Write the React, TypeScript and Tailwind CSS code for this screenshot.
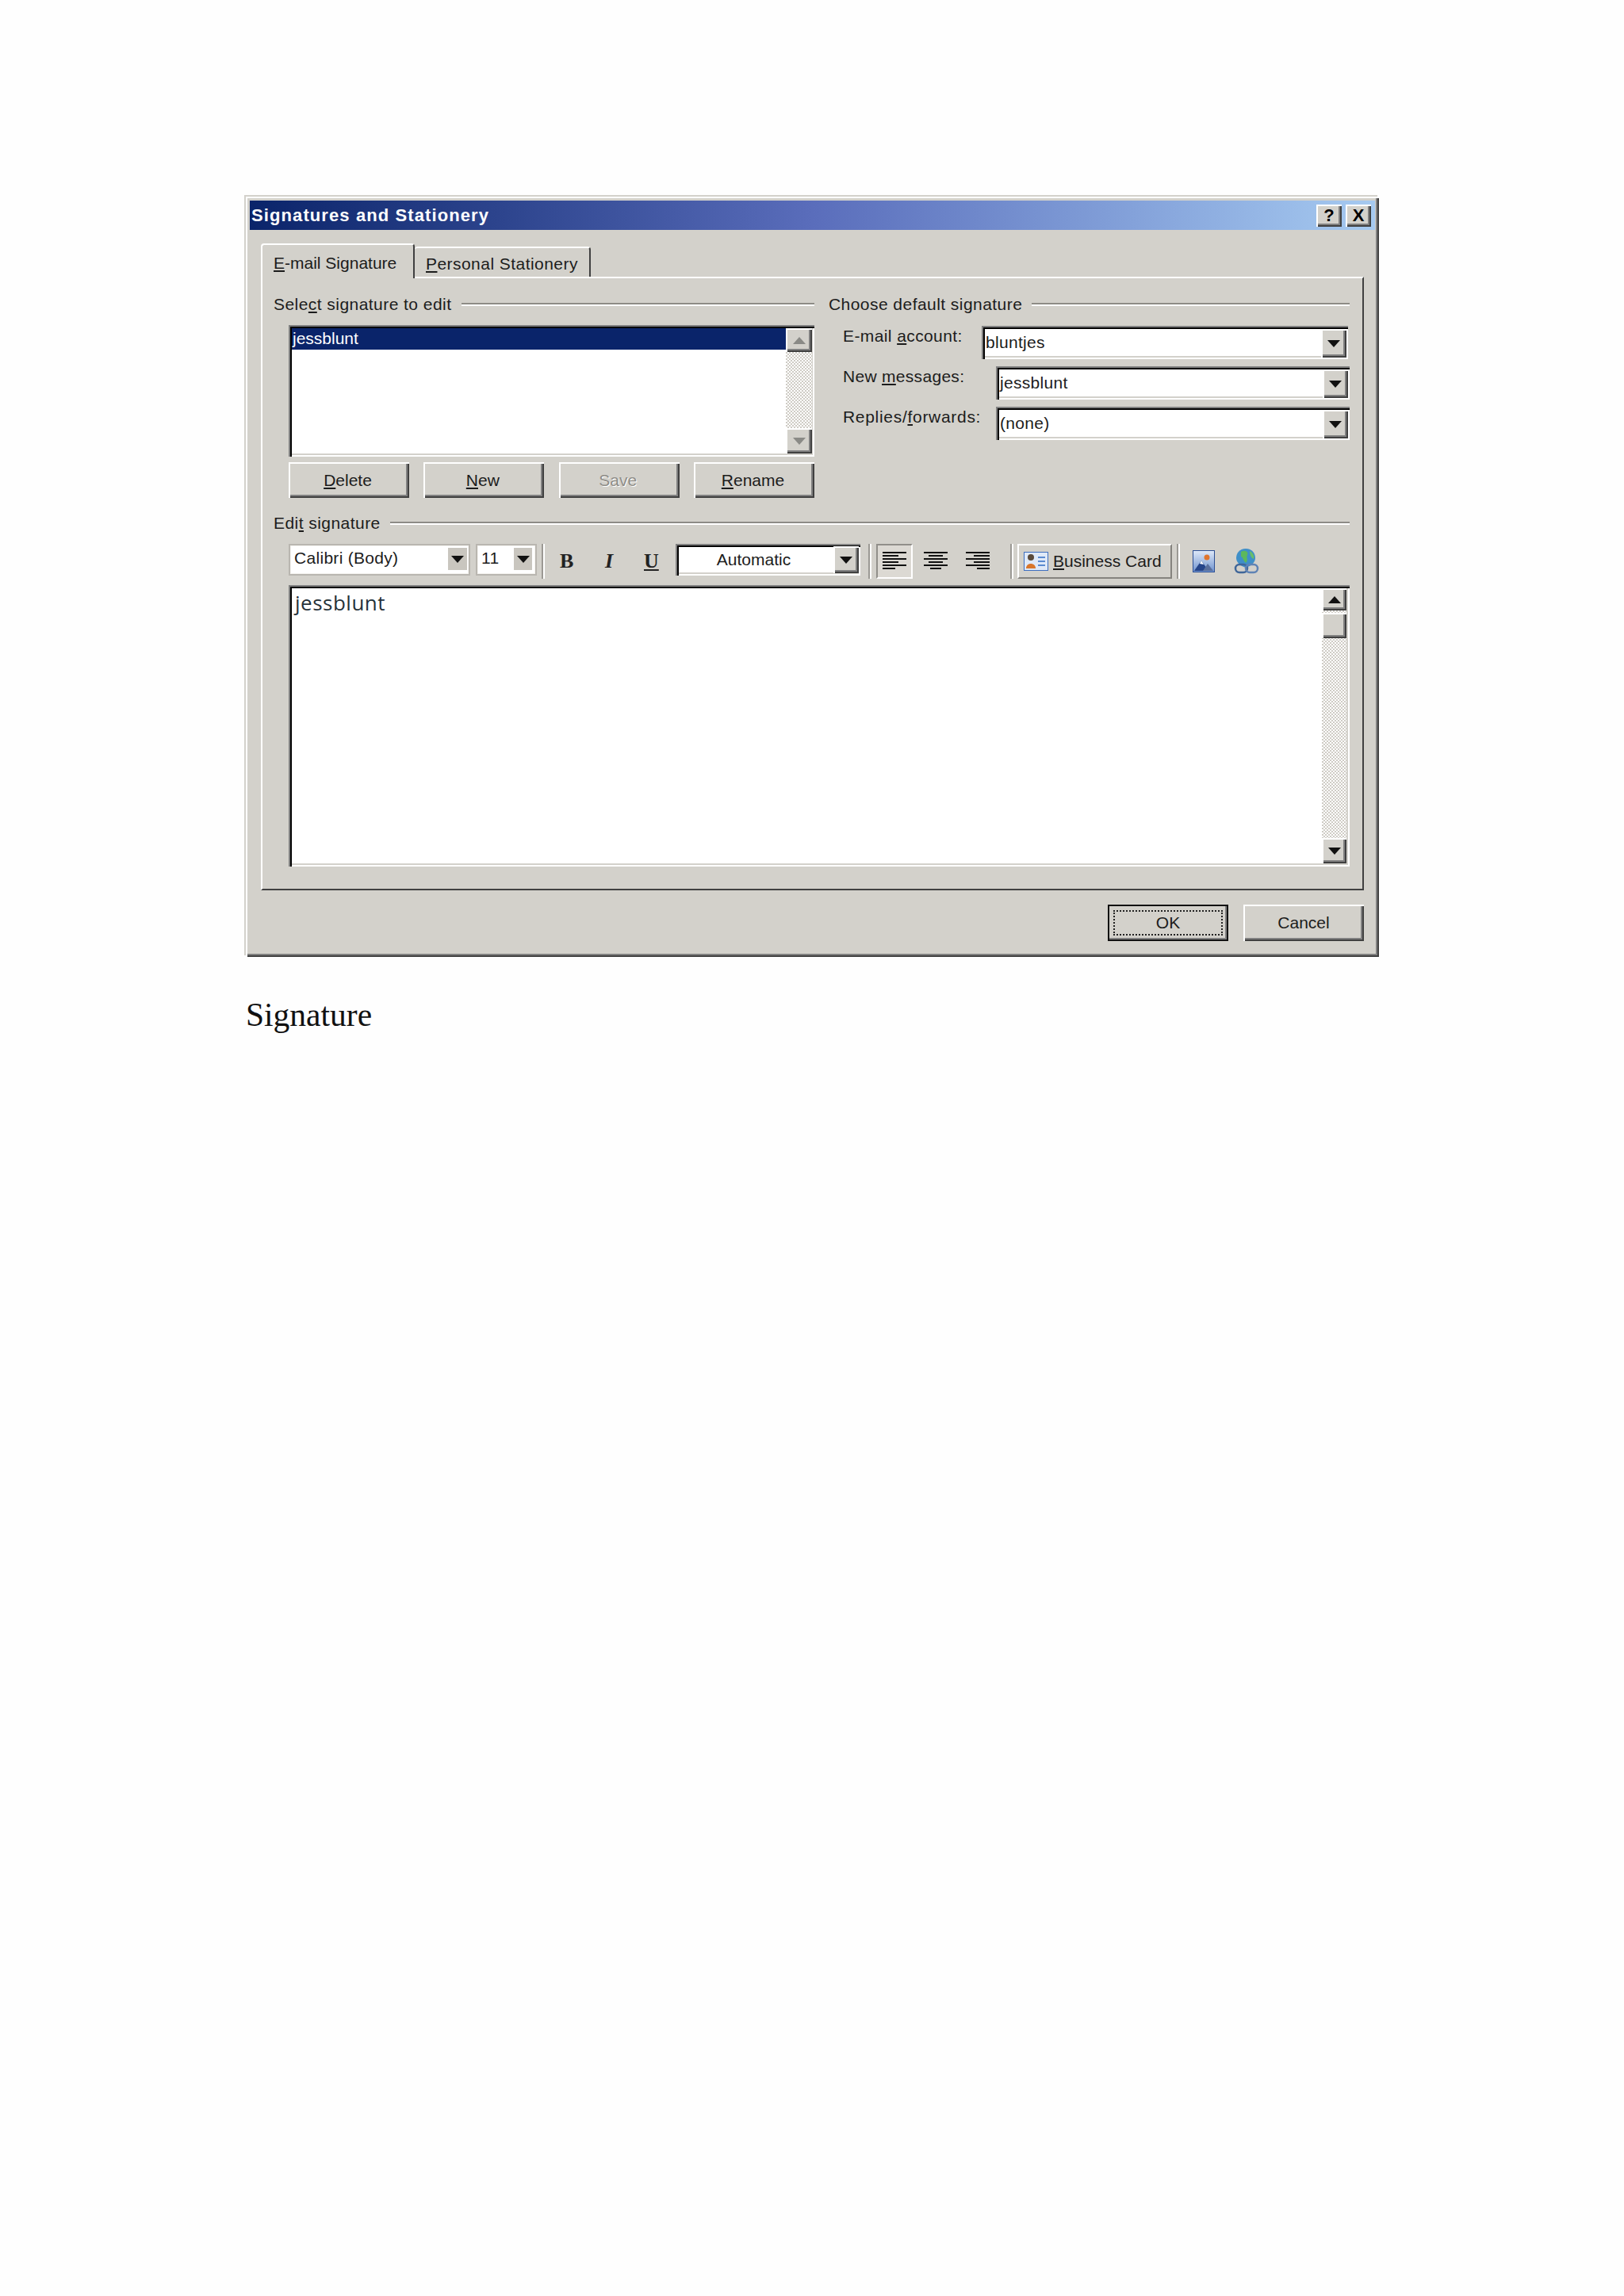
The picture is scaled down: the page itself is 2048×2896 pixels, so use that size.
const raised = 'shadow-[inset_2px_2px_0_#ffffff,inset_-2px_-2px_0_#404040,inset_-4px_-4px_0_#808080]';
const sunken = 'shadow-[inset_2px_2px_0_#808080,inset_4px_4px_0_#000000,inset_-2px_-2px_0_#ffffff,inset_-4px_-4px_0_#d3d1cb]';
const track = 'bg-[repeating-conic-gradient(#cfccc5_0_25%,#ffffff_0_50%)] bg-size-[4px_4px]';

function Arrow({ up, muted }: { up?: boolean; muted?: boolean }) {
  return (
    <svg width="16" height="9" viewBox="0 0 16 9">
      <path d={up ? 'M8 0 L16 9 L0 9 Z' : 'M0 0 L16 0 L8 9 Z'} fill={muted ? '#8a8a86' : '#111111'} />
    </svg>
  );
}

function ArrowButton({ up, muted, className }: { up?: boolean; muted?: boolean; className: string }) {
  return (
    <div className={`flex items-center justify-center bg-[#d3d1cb] ${raised} ${className}`}>
      <Arrow up={up} muted={muted} />
    </div>
  );
}

function GroupLabel({ children, lineLeft }: { children: React.ReactNode; lineLeft: string }) {
  return (
    <div className="flex h-[24px] items-center">
      <span className="whitespace-nowrap tracking-[0.45px]">{children}</span>
      <div className={`h-[4px] flex-1 border-t-2 border-b-2 border-t-[#8d8b86] border-b-white ${lineLeft}`} />
    </div>
  );
}

function Button({ children, disabled }: { children: React.ReactNode; disabled?: boolean }) {
  return (
    <div className={`flex h-[45px] w-[152px] items-center justify-center bg-[#d3d1cb] pr-[3px] ${raised} ${disabled ? 'text-[#8f8d88] [text-shadow:1px_1px_0_#ffffff]' : ''}`}>
      <span>{children}</span>
    </div>
  );
}

function Combo({ text, className }: { text: string; className: string }) {
  return (
    <div className={`flex h-[42px] bg-white pl-[5px] ${sunken} ${className}`}>
      <span className="flex-1 pt-[9px] tracking-[0.3px]">{text}</span>
      <ArrowButton className="mt-[4px] mr-[2px] h-[36px] w-[32px]" />
    </div>
  );
}

function FlatCombo({ text, className, buttonClass }: { text: string; className: string; buttonClass: string }) {
  return (
    <div className={`flex h-[40px] border-2 border-[#b9b6b0] bg-white pl-[5px] shadow-[inset_0_0_0_1px_#f4f3ef] ${className}`}>
      <span className="flex-1 pt-[4px] tracking-[0.3px]">{text}</span>
      <div className={`mt-[3px] flex h-[28px] items-center justify-center bg-[#c9c6bf] ${buttonClass}`}>
        <Arrow />
      </div>
    </div>
  );
}

function ToolbarSeparator({ className }: { className: string }) {
  return <div className={`h-[44px] w-[4px] border-r-2 border-l-2 border-r-white border-l-[#9b9994] ${className}`} />;
}

function AlignIcon({ lines }: { lines: [number, number][] }) {
  return (
    <svg width="30" height="24" viewBox="0 0 30 24">
      {lines.map(([x, w], i) => (
        <rect key={i} x={x} y={i * 4} width={w} height="2" fill="#111111" />
      ))}
    </svg>
  );
}

function CardIcon() {
  return (
    <svg width="31" height="24" viewBox="0 0 31 24">
      <rect x="0.5" y="0.5" width="30" height="23" fill="#dfe9f8" stroke="#3f6fbf" />
      <circle cx="9" cy="7" r="4" fill="#5a4a3a" />
      <path d="M3 21 C3 13 15 13 15 21 Z" fill="#d9762b" />
      <path d="M18 7h9M18 12h9M18 17h9" stroke="#5b8bd0" strokeWidth="2" />
    </svg>
  );
}

function PictureIcon() {
  return (
    <svg width="28" height="28" viewBox="0 0 28 28">
      <defs>
        <linearGradient id="pic-sky" x1="0" y1="0" x2="0" y2="1">
          <stop offset="0" stopColor="#dfe9f8" />
          <stop offset="1" stopColor="#6f93cf" />
        </linearGradient>
      </defs>
      <rect x="0.5" y="0.5" width="27" height="27" fill="url(#pic-sky)" stroke="#2c4f94" />
      <circle cx="18" cy="9" r="3.5" fill="#e0752d" />
      <path d="M2 26 L11 13 L20 26 Z" fill="#26458a" />
      <path d="M13 26 L19 17 L26 26 Z" fill="#5a6f9c" />
      <path d="M11 13 L14 18 L9 17 Z" fill="#ffffff" />
    </svg>
  );
}

function LinkIcon() {
  return (
    <svg width="32" height="33" viewBox="0 0 32 33">
      <path d="M15 0 C23 0 27 6 27 12 C27 17 22 22 15 24 C8 22 3 17 3 12 C3 6 7 0 15 0 Z" fill="#3f8fc8" />
      <path d="M9 4 C14 1 19 4 17 8 C15 11 19 14 15 18 C11 14 12 11 9 10 Z" fill="#5cb85c" />
      <path d="M20 3 C24 5 26 9 25 13 C22 12 20 8 20 3 Z" fill="#69bf69" />
      <rect x="2" y="20" width="15" height="10" rx="5" fill="none" stroke="#3f6699" strokeWidth="2.5" />
      <rect x="15" y="20" width="15" height="10" rx="5" fill="none" stroke="#5f83b5" strokeWidth="2.5" />
    </svg>
  );
}

export default function App() {
  return (
    <div className="min-h-[2896px] bg-[#fefefe] pt-[248px] pl-[310px] font-['Liberation_Sans',sans-serif] text-[21px] leading-[24px] text-[#1c1c1c]">
      <div className="flex h-[959px] w-[1429px] flex-col bg-[#d3d1cb] p-[5px] shadow-[-2px_-2px_0_#d3d1cb,inset_2px_2px_0_#ffffff,inset_-2px_-2px_0_#404040,inset_-4px_-4px_0_#808080]">
        {/* title bar */}
        <div className="flex h-[37px] items-center justify-between bg-gradient-to-r from-[#0a246a] via-[#5a6dbb] to-[#a6caf0] pr-[5px] pl-[2px]">
          <span className="text-[22px] font-bold tracking-[1.1px] text-white">Signatures and Stationery</span>
          <div className="flex gap-[5px]">
            <div className={`flex h-[28px] w-[32px] items-center justify-center bg-[#d3d1cb] text-[22px] font-bold text-black ${raised}`}>?</div>
            <div className={`flex h-[28px] w-[32px] items-center justify-center bg-[#d3d1cb] text-[22px] font-bold text-black ${raised}`}>X</div>
          </div>
        </div>

        {/* tabs */}
        <div className="mt-[17px] ml-[14px] flex h-[42px] items-end">
          <div className="relative z-10 -mb-[2px] flex h-[44px] w-[194px] rounded-t-[4px] border-t-2 border-r-2 border-l-2 border-t-white border-r-[#404040] border-l-white bg-[#d3d1cb] pt-[11px] pl-[14px]">
            <span><u className="underline-offset-2">E</u>-mail Signature</span>
          </div>
          <div className="flex h-[38px] w-[222px] rounded-t-[4px] border-t-2 border-r-2 border-t-white border-r-[#404040] pt-[8px] pl-[14px]">
            <span className="tracking-[0.45px]"><u className="underline-offset-2">P</u>ersonal Stationery</span>
          </div>
        </div>

        {/* tab panel */}
        <div className="ml-[14px] h-[774px] w-[1391px] border-2 border-t-white border-r-[#404040] border-b-[#404040] border-l-white px-[14px] pt-[21px]">
          <div className="flex gap-[18px]">
            <div className="w-[682px]">
              <GroupLabel lineLeft="ml-[13px]">Sele<u className="underline-offset-2">c</u>t signature to edit</GroupLabel>
              <div className="mt-[14px] ml-[19px] w-[663px]">
                <div className={`flex h-[166px] bg-white p-[4px] pr-[3px] ${sunken}`}>
                  <div className="flex-1">
                    <div className="h-[27px] bg-[#0a246a] pt-[1px] pl-[1px] text-white">jessblunt</div>
                  </div>
                  <div className={`flex w-[33px] flex-col justify-between ${track}`}>
                    <ArrowButton up muted className="h-[30px]" />
                    <ArrowButton muted className="h-[32px]" />
                  </div>
                </div>
                <div className="mt-[7px] flex justify-between">
                  <Button><u className="underline-offset-2">D</u>elete</Button>
                  <Button><u className="underline-offset-2">N</u>ew</Button>
                  <Button disabled>Save</Button>
                  <Button><u className="underline-offset-2">R</u>ename</Button>
                </div>
              </div>
            </div>

            <div className="w-[657px]">
              <GroupLabel lineLeft="ml-[12px]">Choose default signature</GroupLabel>
              <div className="mt-[15px] flex flex-col gap-[9px] pl-[18px]">
                <div className="flex justify-between pr-[2px]">
                  <span className="pt-[1px] tracking-[0.4px]">E-mail <u className="underline-offset-2">a</u>ccount:</span>
                  <Combo text="bluntjes" className="w-[462px]" />
                </div>
                <div className="flex justify-between">
                  <span className="pt-[1px] tracking-[0.3px]">New <u className="underline-offset-2">m</u>essages:</span>
                  <Combo text="jessblunt" className="w-[446px]" />
                </div>
                <div className="flex justify-between">
                  <span className="pt-[1px] tracking-[0.7px]">Replies/<u className="underline-offset-2">f</u>orwards:</span>
                  <Combo text="(none)" className="w-[446px]" />
                </div>
              </div>
            </div>
          </div>

          {/* edit signature */}
          <div className="mt-[20px] w-[1357px]">
            <GroupLabel lineLeft="ml-[12px]">Edi<u className="underline-offset-2">t</u> signature</GroupLabel>
          </div>
          <div className="mt-[14px] ml-[19px] flex h-[44px] items-start">
            <FlatCombo text="Calibri (Body)" className="w-[229px]" buttonClass="w-[24px] mr-[2px]" />
            <FlatCombo text="11" className="ml-[7px] w-[77px]" buttonClass="w-[23px] mr-[4px]" />
            <ToolbarSeparator className="ml-[6px]" />
            <div className="flex h-[44px] items-center font-['Liberation_Serif',serif] text-[26px] text-[#222222]">
              <span className="ml-[19px] w-[24px] font-bold">B</span>
              <span className="ml-[33px] w-[24px] font-bold italic">I</span>
              <span className="ml-[25px] w-[24px] font-bold underline underline-offset-2">U</span>
            </div>
            <div className={`ml-[16px] flex h-[40px] w-[233px] bg-white ${sunken}`}>
              <span className="flex-1 pt-[8px] pr-[2px] text-center">Automatic</span>
              <ArrowButton className="mt-[3px] mr-[2px] h-[34px] w-[32px]" />
            </div>
            <ToolbarSeparator className="ml-[10px]" />
            <div className="ml-[6px] flex h-[44px] w-[46px] items-center justify-center border-2 border-t-[#918f8a] border-r-white border-b-white border-l-[#918f8a] bg-[#dcd9d3]">
              <AlignIcon lines={[[0, 30], [0, 20], [0, 30], [0, 20], [0, 30], [0, 16]]} />
            </div>
            <div className="flex h-[44px] w-[58px] items-center justify-center">
              <AlignIcon lines={[[0, 30], [6, 18], [0, 30], [6, 18], [0, 30], [8, 14]]} />
            </div>
            <div className="flex h-[44px] w-[48px] items-center justify-center">
              <AlignIcon lines={[[0, 30], [10, 20], [0, 30], [10, 20], [0, 30], [14, 16]]} />
            </div>
            <ToolbarSeparator className="ml-[17px]" />
            <div className="ml-[5px] flex h-[44px] w-[195px] items-center border-2 border-t-white border-r-[#85837e] border-b-[#85837e] border-l-white pl-[6px]">
              <CardIcon />
              <span className="ml-[6px]"><u className="underline-offset-2">B</u>usiness Card</span>
            </div>
            <ToolbarSeparator className="ml-[6px]" />
            <div className="mt-[8px] ml-[16px]"><PictureIcon /></div>
            <div className="mt-[6px] ml-[24px]"><LinkIcon /></div>
          </div>

          <div className={`mt-[8px] ml-[19px] flex h-[355px] w-[1338px] bg-white p-[4px] ${sunken}`}>
            <span className="flex-1 pt-[5px] pl-[4px] font-['Open_Sans',sans-serif] text-[26px] leading-[26px] tracking-[0.5px] text-[#26323a]">jessblunt</span>
            <div className={`flex w-[31px] flex-col ${track}`}>
              <ArrowButton up className="h-[28px] shrink-0" />
              <div className={`mt-[3px] h-[32px] shrink-0 bg-[#d3d1cb] ${raised}`} />
              <ArrowButton className="mt-auto h-[32px] shrink-0" />
            </div>
          </div>
        </div>

        {/* footer buttons */}
        <div className="mt-[18px] mr-[14px] flex justify-end gap-[19px]">
          <div className="flex h-[46px] w-[152px] border-2 border-[#111111] bg-[#d3d1cb] p-[5px] shadow-[inset_-2px_-2px_0_#808080]">
            <div className="flex flex-1 items-center justify-center border-2 border-dotted border-[#222222]">OK</div>
          </div>
          <div className={`flex h-[46px] w-[152px] items-center justify-center bg-[#d3d1cb] ${raised}`}>Cancel</div>
        </div>
      </div>

      <p className="mt-[50px] font-['Liberation_Serif',serif] text-[41.5px] leading-[46px] text-[#111111]">Signature</p>
    </div>
  );
}
